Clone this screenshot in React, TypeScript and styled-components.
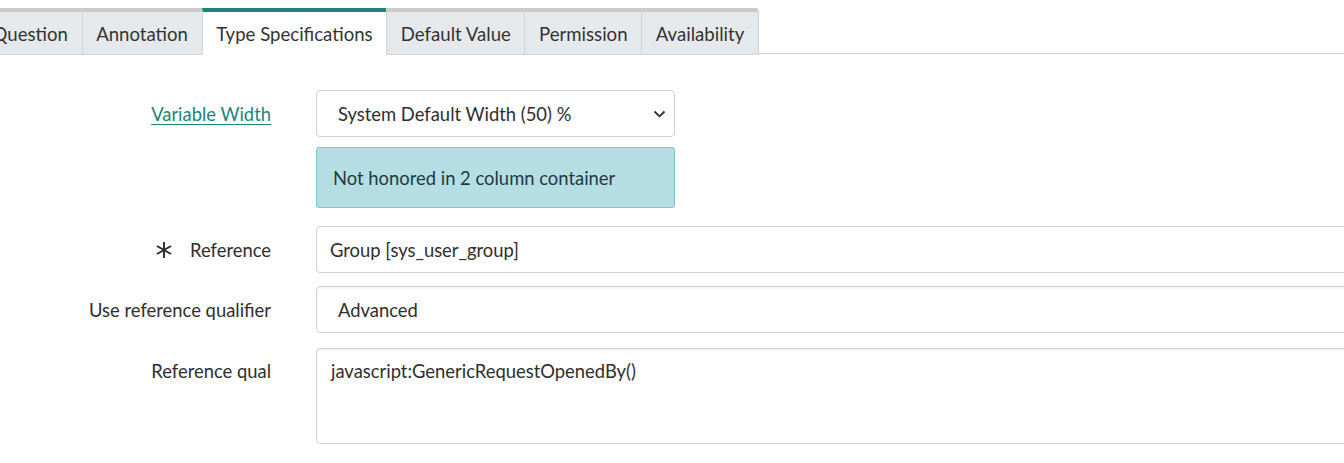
import { FC } from "react";
import styled, { createGlobalStyle } from "styled-components";

const tabs = [
  "Question",
  "Annotation",
  "Type Specifications",
  "Default Value",
  "Permission",
  "Availability",
];

const GlobalStyle = createGlobalStyle`
  html, body {
    margin: 0;
    padding: 0;
    background: #ffffff;
    overflow: hidden;
  }
  body {
    font-family: Lato, "Noto Sans", "Liberation Sans", sans-serif;
    color: #2e2e2e;
  }
`;

const Asterisk: FC = () => (
  <svg width="16" height="16" viewBox="0 0 16 16">
    <g stroke="#2b2b2b" strokeWidth="1.9">
      <line x1="8" y1="0" x2="8" y2="16" />
      <line x1="1" y1="4" x2="15" y2="12" />
      <line x1="1" y1="12" x2="15" y2="4" />
    </g>
  </svg>
);

const Chevron: FC = () => (
  <svg width="13" height="8" viewBox="0 0 13 8">
    <path d="M1.5 1.5 L6.5 6.3 L11.5 1.5" fill="none" stroke="#2b2b2b" strokeWidth="1.8" />
  </svg>
);

const App: FC = () => {
  const active = "Type Specifications";
  return (
    <Page>
      <GlobalStyle />
      <TabBar>
        {tabs.map((t, i) => (
          <Tab key={t} $active={t === active} $last={i === tabs.length - 1}>
            {t}
          </Tab>
        ))}
        <TabFill />
      </TabBar>

      <Form>
        <Row $gap={18}>
          <Label>
            <FieldLink>Variable Width</FieldLink>
          </Label>
          <Field>
            <Select $width={359}>
              <span>System Default Width (50) %</span>
              <Chevron />
            </Select>
            <InfoBox>Not honored in 2 column container</InfoBox>
          </Field>
        </Row>

        <Row $gap={13}>
          <Label>
            <Required>
              <Asterisk />
            </Required>
            Reference
          </Label>
          <Field>
            <TextInput>Group [sys_user_group]</TextInput>
          </Field>
        </Row>

        <Row $gap={15}>
          <Label>Use reference qualifier</Label>
          <Field>
            <Select>
              <span>Advanced</span>
            </Select>
          </Field>
        </Row>

        <Row $gap={0}>
          <Label $top>Reference qual</Label>
          <Field>
            <TextArea>javascript:GenericRequestOpenedBy()</TextArea>
          </Field>
        </Row>
      </Form>
    </Page>
  );
};

const Page = styled.div`
  width: 1344px;
  padding-top: 8px;
`;

const TabBar = styled.div`
  display: flex;
  align-items: stretch;
  margin-left: -22px;
  height: 47px;
`;

const Tab = styled.div<{ $active: boolean; $last: boolean }>`
  display: flex;
  align-items: center;
  box-sizing: border-box;
  padding: 2px 13.6px 0;
  font-size: 18.6px;
  color: #333333;
  white-space: nowrap;
  background: ${(p) => (p.$active ? "#ffffff" : "#e6e9eb")};
  border-top: 4px solid ${(p) => (p.$active ? "#1f8476" : "#cbcbcb")};
  border-left: 1px solid #d2d4d6;
  border-right: ${(p) => (p.$last ? "1px solid #d2d4d6" : "none")};
  border-bottom: 1px solid ${(p) => (p.$active ? "transparent" : "#d2d4d6")};
  border-top-right-radius: ${(p) => (p.$last ? "4px" : "0")};
`;

const TabFill = styled.div`
  flex: 1;
  border-bottom: 1px solid #d2d4d6;
  margin-bottom: 1px;
`;

const Form = styled.div`
  display: flex;
  flex-direction: column;
  margin-top: 35px;
  width: 1400px;
`;

const Row = styled.div<{ $gap: number }>`
  display: flex;
  align-items: flex-start;
  margin-bottom: ${(p) => p.$gap}px;
`;

const Label = styled.div<{ $top?: boolean }>`
  width: 271px;
  flex-shrink: 0;
  height: 47px;
  box-sizing: border-box;
  display: flex;
  align-items: ${(p) => (p.$top ? "flex-start" : "center")};
  justify-content: flex-end;
  padding-top: ${(p) => (p.$top ? "12px" : "0")};
  margin-right: 45px;
  font-size: 18.4px;
  color: #2e2e2e;
`;

const FieldLink = styled.span`
  color: #1f8476;
  text-decoration: underline;
  text-underline-offset: 3px;
`;

const Required = styled.span`
  display: inline-flex;
  margin-right: 18px;
  margin-top: 1px;
`;

const Field = styled.div`
  flex: 1;
  display: flex;
  flex-direction: column;
  gap: 10px;
`;

const Select = styled.div<{ $width?: number }>`
  width: ${(p) => (p.$width ? `${p.$width}px` : "auto")};
  height: 47px;
  box-sizing: border-box;
  border: 1px solid #cfd1d3;
  border-radius: 4px;
  background: #ffffff;
  display: flex;
  align-items: center;
  justify-content: space-between;
  padding: 0 8px 0 21px;
  font-size: 18.4px;
  color: #2e2e2e;
  box-shadow: ${(p) => (p.$width ? "none" : "inset 0 2px 2px rgba(0,0,0,0.04)")};
`;

const InfoBox = styled.div`
  width: 359px;
  height: 61px;
  box-sizing: border-box;
  background: #b5dde4;
  border: 1px solid #7fc3cf;
  border-radius: 3px;
  display: flex;
  align-items: center;
  padding: 0 16px;
  font-size: 18.4px;
  color: #1f3a40;
`;

const TextInput = styled.div`
  height: 47px;
  box-sizing: border-box;
  border: 1px solid #cfd1d3;
  border-radius: 4px;
  display: flex;
  align-items: center;
  padding: 0 13px;
  font-size: 18.4px;
  color: #2e2e2e;
`;

const TextArea = styled.div`
  height: 96px;
  box-sizing: border-box;
  border: 1px solid #cfd1d3;
  border-radius: 4px;
  padding: 11px 14px;
  font-size: 18.4px;
  color: #2e2e2e;
  box-shadow: inset 0 2px 2px rgba(0, 0, 0, 0.04);
`;

export default App;
